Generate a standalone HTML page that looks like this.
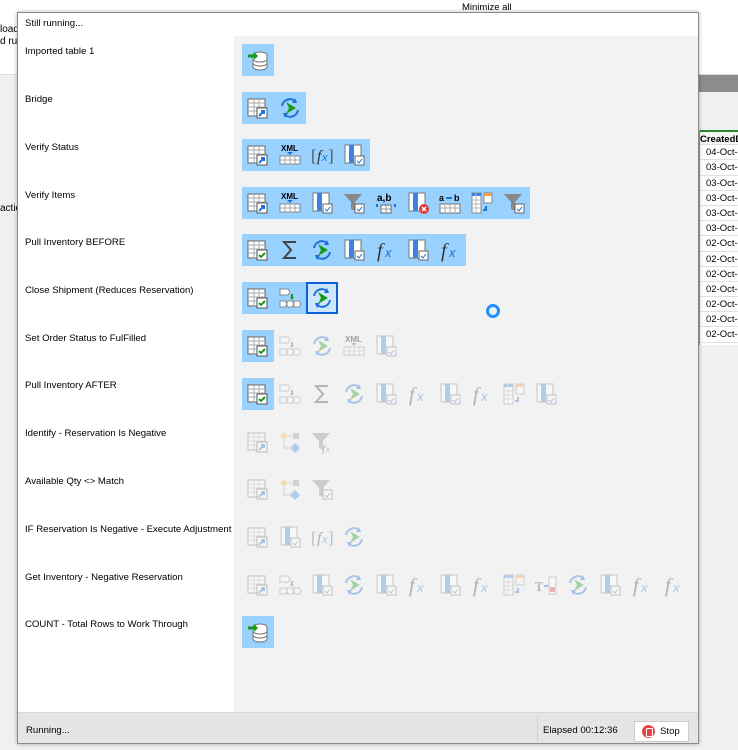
<!DOCTYPE html>
<html><head><style>
*{margin:0;padding:0;box-sizing:border-box}
body{width:738px;height:750px;overflow:hidden;background:#f0f0f0;font-family:"Liberation Sans",sans-serif;font-size:9.6px;color:#000;position:relative}
.bgtop{position:absolute;left:0;top:0;width:738px;height:75px;background:#fff;border-bottom:1px solid #ddd}
.bgbar{position:absolute;left:698px;top:75px;width:40px;height:17px;background:#8c8c8c}
.bgtbl{position:absolute;left:698px;top:130px;width:40px;height:215px;background:#fff;border-left:2px solid #999}
.bgtbl div{height:15.2px;border-bottom:1px solid #e0e0e0;padding-left:6px;font-size:9.5px;line-height:15px;white-space:nowrap;overflow:hidden}
.bgtbl .h{border-top:2px solid #2a8a2a;font-weight:bold;padding-left:0;background:#f4f4f4}
.dlg{position:absolute;left:17px;top:12px;width:682px;height:732px;background:#fff;border:1px solid #8a8a8a;box-shadow:0 0 4px rgba(0,0,0,.3)}
.title{position:absolute;left:7px;top:5px}
.panel{position:absolute;left:216px;top:23px;width:464px;height:676px;background:#f2f2f2}
.lbl{position:absolute;left:7px;white-space:nowrap}
.row{position:absolute;left:224px;height:32px;display:flex}
.row .hl{background:#99d1ff}
.ic{width:32px;height:32px;display:flex;align-items:center;justify-content:center}
.ic svg{width:24px;height:24px}
.f{opacity:.35}
.sel{outline:2px solid #0a5fd6;outline-offset:-2px;background:#cce6ff}
.status{position:absolute;left:0;top:699px;width:680px;height:31px;background:#e5e5e5;border-top:1px solid #d8d8d8}
.status .r{position:absolute;left:8px;top:12px}
.status .e{position:absolute;left:525px;top:12px}
.status .sep{position:absolute;left:519px;top:3px;width:1px;height:26px;background:#d0d0d0}
.stop{position:absolute;left:616px;top:8px;width:55px;height:21px;background:#fff;border:1px solid #ccc;padding-left:25px;line-height:19px}
.stop:before{content:"";position:absolute;left:7px;top:3px;width:13px;height:13px;border-radius:50%;background:#e84545}
.stop:after{content:"";position:absolute;left:11px;top:6px;width:5px;height:7px;border:1px solid #fff;border-radius:1px}
.spin{position:absolute;left:486px;top:304px;width:14px;height:14px;border-radius:50%;border:3px solid #1e90ff}
</style></head><body>
<svg width="0" height="0" style="position:absolute">
<defs>
<symbol id="tbl" viewBox="0 0 24 24"><rect x="2" y="3" width="17" height="17" fill="#fff" stroke="#666"/><path d="M2 7h17M2 11h17M2 15h17M8 3v17M13 3v17" stroke="#aaa"/><rect x="11" y="12" width="10" height="10" fill="#fff" stroke="#555"/><path d="M13 20l5-5M15 15h3v3" stroke="#1e6fd9" stroke-width="2" fill="none"/></symbol>
<symbol id="tblc" viewBox="0 0 24 24"><rect x="2" y="3" width="17" height="17" fill="#fff" stroke="#666"/><path d="M2 7h17M2 11h17M2 15h17M8 3v17M13 3v17" stroke="#aaa"/><rect x="11" y="12" width="10" height="10" fill="#fff" stroke="#555"/><path d="M13 17l2 2 4-4" stroke="#1a9a1a" stroke-width="2" fill="none"/></symbol>
<symbol id="db" viewBox="0 0 24 24"><ellipse cx="14" cy="7" rx="7" ry="3" fill="#fff" stroke="#777"/><path d="M7 7v12c0 4 14 4 14 0V7M7 11c0 4 14 4 14 0M7 15c0 4 14 4 14 0" fill="#fff" stroke="#777"/><path d="M2 8h7" stroke="#1a9a1a" stroke-width="3"/><path d="M8 4l4 4-4 4z" fill="#1a9a1a"/></symbol>
<symbol id="cyc" viewBox="0 0 24 24"><path d="M4 10a8 8 0 0 1 14-4M20 14a8 8 0 0 1-14 4" stroke="#1e6fd9" stroke-width="2" fill="none"/><path d="M17 2l2 5-5 0z M7 22l-2-5 5 0z" fill="#1e6fd9"/><path d="M8 6l10 6-10 6 3-6z" fill="#1a9a1a"/></symbol>
<symbol id="xml" viewBox="0 0 24 24"><text x="3" y="8" font-size="8" font-family="Liberation Sans" font-weight="bold">XML</text><path d="M9 9h6l-3 3z" fill="#1e6fd9"/><rect x="2" y="13" width="20" height="8" fill="#fff" stroke="#888"/><path d="M2 17h20M7 13v8M12 13v8M17 13v8" stroke="#aaa"/></symbol>
<symbol id="fxb" viewBox="0 0 24 24"><text x="1" y="18" font-size="17" font-family="Liberation Serif" fill="#555">[</text><text x="7" y="18" font-size="16" font-style="italic" font-family="Liberation Serif" fill="#333">f</text><text x="12" y="18" font-size="11" font-style="italic" font-family="Liberation Sans" fill="#1e6fd9">x</text><text x="18" y="18" font-size="17" font-family="Liberation Serif" fill="#555">]</text></symbol>
<symbol id="fx" viewBox="0 0 24 24"><text x="3" y="19" font-size="20" font-style="italic" font-family="Liberation Serif" fill="#333">f</text><text x="11" y="19" font-size="13" font-style="italic" font-family="Liberation Sans" fill="#1e6fd9">x</text></symbol>
<symbol id="col" viewBox="0 0 24 24"><rect x="3" y="2" width="16" height="18" fill="#fff" stroke="#777"/><rect x="7" y="2" width="5" height="18" fill="#3d82e0"/><rect x="13" y="13" width="9" height="9" fill="#fff" stroke="#666"/><path d="M15 18l2 2 3-4" stroke="#1e6fd9" fill="none"/></symbol>
<symbol id="colx" viewBox="0 0 24 24"><rect x="3" y="2" width="16" height="18" fill="#fff" stroke="#777"/><rect x="7" y="2" width="5" height="18" fill="#3d82e0"/><circle cx="18" cy="18" r="5" fill="#e03a3a"/><path d="M16 16l4 4M20 16l-4 4" stroke="#fff" stroke-width="1.5"/></symbol>
<symbol id="filt" viewBox="0 0 24 24"><path d="M2 3h18l-7 8v9l-4-2v-7z" fill="#888"/><rect x="13" y="13" width="9" height="9" fill="#fff" stroke="#666"/><path d="M15 18l2 2 3-4" stroke="#1e6fd9" fill="none"/></symbol>
<symbol id="filtfx" viewBox="0 0 24 24"><path d="M2 3h18l-7 8v9l-4-2v-7z" fill="#888"/><text x="12" y="22" font-size="11" font-style="italic" font-family="Liberation Serif" fill="#333">f</text><text x="16" y="22" font-size="8" fill="#1e6fd9">x</text></symbol>
<symbol id="ab" viewBox="0 0 24 24"><text x="3" y="10" font-size="10" font-weight="bold" font-family="Liberation Sans">a,b</text><rect x="7" y="14" width="10" height="8" fill="#fff" stroke="#666"/><path d="M7 18h10M12 14v8" stroke="#999"/><path d="M3 13v3M21 13v3" stroke="#1e6fd9" stroke-width="2"/></symbol>
<symbol id="a2b" viewBox="0 0 24 24"><text x="1" y="10" font-size="9" font-weight="bold" font-family="Liberation Sans">a</text><text x="16" y="10" font-size="9" font-weight="bold" font-family="Liberation Sans">b</text><path d="M8 7h6" stroke="#1e6fd9" stroke-width="2"/><rect x="2" y="13" width="20" height="9" fill="#fff" stroke="#777"/><path d="M2 17h20M7 13v9M12 13v9M17 13v9" stroke="#aaa"/></symbol>
<symbol id="split" viewBox="0 0 24 24"><rect x="2" y="2" width="9" height="20" fill="#fff" stroke="#888"/><rect x="2" y="2" width="9" height="3" fill="#3d82e0"/><path d="M2 9h9M2 13h9M2 17h9M6 2v20" stroke="#bbb"/><rect x="14" y="2" width="8" height="10" fill="#fff" stroke="#888"/><rect x="14" y="2" width="8" height="3" fill="#f0a050"/><path d="M16 15v4h-3" stroke="#1e6fd9" stroke-width="2" fill="none"/></symbol>
<symbol id="sigma" viewBox="0 0 24 24"><path d="M18 4H6l7 8-7 8h12" stroke="#444" stroke-width="2" fill="none"/></symbol>
<symbol id="seq" viewBox="0 0 24 24"><path d="M2 3h8l2 3-2 3H2z M2 15h5l2 3-2 3H2z M9 15h5l2 3-2 3H9z M16 15h5l2 3-2 3h-5z" fill="#fff" stroke="#888"/><path d="M14 8v5" stroke="#1a9a1a" stroke-width="2"/><path d="M12 11h4l-2 3z" fill="#1a9a1a"/></symbol>
<symbol id="dia" viewBox="0 0 24 24"><path d="M6 2l4 4-4 4-4-4z" fill="#f5b050"/><path d="M10 6h4" stroke="#999"/><rect x="15" y="3" width="6" height="6" fill="#999"/><path d="M6 10v8h6" stroke="#999" fill="none"/><path d="M17 13l5 5-5 5-5-5z" fill="#3d82e0"/></symbol>
<symbol id="tt" viewBox="0 0 24 24"><text x="1" y="18" font-size="13" font-family="Liberation Serif">T</text><path d="M10 13h5" stroke="#1e6fd9" stroke-width="2"/><rect x="15" y="4" width="7" height="17" fill="#fff" stroke="#888"/><rect x="16" y="14" width="5" height="5" fill="#e03a3a"/></symbol>
</defs></svg>

<div class="bgtop"></div>
<div style="position:absolute;left:0;top:24px;font-size:10px;line-height:12px">load<br>d ru</div>
<div style="position:absolute;left:0;top:203px;font-size:10px">actio</div>
<div style="position:absolute;left:462px;top:2px;font-size:9.5px">Minimize all</div>
<div class="bgbar"></div>
<div class="bgtbl"><div class="h">CreatedDa</div><div>04-Oct-2</div><div>03-Oct-2</div><div>03-Oct-2</div><div>03-Oct-2</div><div>03-Oct-2</div><div>03-Oct-2</div><div>02-Oct-2</div><div>02-Oct-2</div><div>02-Oct-2</div><div>02-Oct-2</div><div>02-Oct-2</div><div>02-Oct-2</div><div>02-Oct-2</div></div>

<div class="dlg">
<div class="title">Still running...</div>
<div class="panel"></div>
<div class="lbl" style="top:33px">Imported table 1</div>
<div class="lbl" style="top:81px">Bridge</div>
<div class="lbl" style="top:129px">Verify Status</div>
<div class="lbl" style="top:177px">Verify Items</div>
<div class="lbl" style="top:224px">Pull Inventory BEFORE</div>
<div class="lbl" style="top:272px">Close Shipment (Reduces Reservation)</div>
<div class="lbl" style="top:320px">Set Order Status to FulFilled</div>
<div class="lbl" style="top:367px">Pull Inventory AFTER</div>
<div class="lbl" style="top:415px">Identify - Reservation Is Negative</div>
<div class="lbl" style="top:463px">Available Qty &lt;&gt; Match</div>
<div class="lbl" style="top:511px">IF Reservation Is Negative - Execute Adjustment</div>
<div class="lbl" style="top:559px">Get Inventory - Negative Reservation</div>
<div class="lbl" style="top:606px">COUNT - Total Rows to Work Through</div>

<div class="row" style="top:31px"><div class="ic hl"><svg><use href="#db"/></svg></div></div>
<div class="row" style="top:79px"><div class="ic hl"><svg><use href="#tbl"/></svg></div><div class="ic hl"><svg><use href="#cyc"/></svg></div></div>
<div class="row" style="top:126px"><div class="ic hl"><svg><use href="#tbl"/></svg></div><div class="ic hl"><svg><use href="#xml"/></svg></div><div class="ic hl"><svg><use href="#fxb"/></svg></div><div class="ic hl"><svg><use href="#col"/></svg></div></div>
<div class="row" style="top:174px"><div class="ic hl"><svg><use href="#tbl"/></svg></div><div class="ic hl"><svg><use href="#xml"/></svg></div><div class="ic hl"><svg><use href="#col"/></svg></div><div class="ic hl"><svg><use href="#filt"/></svg></div><div class="ic hl"><svg><use href="#ab"/></svg></div><div class="ic hl"><svg><use href="#colx"/></svg></div><div class="ic hl"><svg><use href="#a2b"/></svg></div><div class="ic hl"><svg><use href="#split"/></svg></div><div class="ic hl"><svg><use href="#filt"/></svg></div></div>
<div class="row" style="top:221px"><div class="ic hl"><svg><use href="#tblc"/></svg></div><div class="ic hl"><svg><use href="#sigma"/></svg></div><div class="ic hl"><svg><use href="#cyc"/></svg></div><div class="ic hl"><svg><use href="#col"/></svg></div><div class="ic hl"><svg><use href="#fx"/></svg></div><div class="ic hl"><svg><use href="#col"/></svg></div><div class="ic hl"><svg><use href="#fx"/></svg></div></div>
<div class="row" style="top:269px"><div class="ic hl"><svg><use href="#tblc"/></svg></div><div class="ic hl"><svg><use href="#seq"/></svg></div><div class="ic sel"><svg><use href="#cyc"/></svg></div></div>
<div class="row" style="top:317px"><div class="ic hl"><svg><use href="#tblc"/></svg></div><div class="ic f"><svg><use href="#seq"/></svg></div><div class="ic f"><svg><use href="#cyc"/></svg></div><div class="ic f"><svg><use href="#xml"/></svg></div><div class="ic f"><svg><use href="#col"/></svg></div></div>
<div class="row" style="top:365px"><div class="ic hl"><svg><use href="#tblc"/></svg></div><div class="ic f"><svg><use href="#seq"/></svg></div><div class="ic f"><svg><use href="#sigma"/></svg></div><div class="ic f"><svg><use href="#cyc"/></svg></div><div class="ic f"><svg><use href="#col"/></svg></div><div class="ic f"><svg><use href="#fx"/></svg></div><div class="ic f"><svg><use href="#col"/></svg></div><div class="ic f"><svg><use href="#fx"/></svg></div><div class="ic f"><svg><use href="#split"/></svg></div><div class="ic f"><svg><use href="#col"/></svg></div></div>
<div class="row" style="top:413px"><div class="ic f"><svg><use href="#tbl"/></svg></div><div class="ic f"><svg><use href="#dia"/></svg></div><div class="ic f"><svg><use href="#filtfx"/></svg></div></div>
<div class="row" style="top:460px"><div class="ic f"><svg><use href="#tbl"/></svg></div><div class="ic f"><svg><use href="#dia"/></svg></div><div class="ic f"><svg><use href="#filt"/></svg></div></div>
<div class="row" style="top:508px"><div class="ic f"><svg><use href="#tbl"/></svg></div><div class="ic f"><svg><use href="#col"/></svg></div><div class="ic f"><svg><use href="#fxb"/></svg></div><div class="ic f"><svg><use href="#cyc"/></svg></div></div>
<div class="row" style="top:556px"><div class="ic f"><svg><use href="#tbl"/></svg></div><div class="ic f"><svg><use href="#seq"/></svg></div><div class="ic f"><svg><use href="#col"/></svg></div><div class="ic f"><svg><use href="#cyc"/></svg></div><div class="ic f"><svg><use href="#col"/></svg></div><div class="ic f"><svg><use href="#fx"/></svg></div><div class="ic f"><svg><use href="#col"/></svg></div><div class="ic f"><svg><use href="#fx"/></svg></div><div class="ic f"><svg><use href="#split"/></svg></div><div class="ic f"><svg><use href="#tt"/></svg></div><div class="ic f"><svg><use href="#cyc"/></svg></div><div class="ic f"><svg><use href="#col"/></svg></div><div class="ic f"><svg><use href="#fx"/></svg></div><div class="ic f"><svg><use href="#fx"/></svg></div></div>
<div class="row" style="top:603px"><div class="ic hl"><svg><use href="#db"/></svg></div></div>

<div class="status"><div class="r">Running...</div><div class="sep"></div><div class="e">Elapsed 00:12:36</div><div class="stop">Stop</div></div>
</div>
<div class="spin"></div>
</body></html>
